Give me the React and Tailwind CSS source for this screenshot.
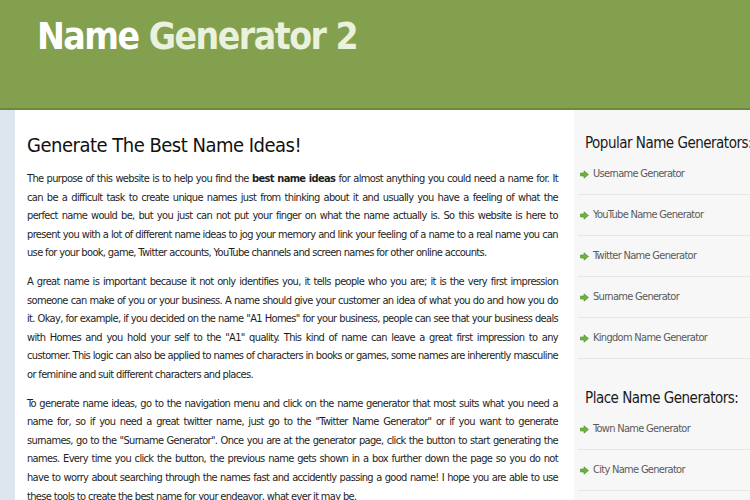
const popular = [
  'Username Generator',
  'YouTube Name Generator',
  'Twitter Name Generator',
  'Surname Generator',
  'Kingdom Name Generator',
];

const places = ['Town Name Generator', 'City Name Generator', 'Country Name Generator'];

const Arrow = () => (
  <svg width="9" height="9" viewBox="0 0 9 9" className="shrink-0">
    <path d="M0.5 3 H4 V0.8 L8.5 4.5 L4 8.2 V6 H0.5 Z" fill="#6fb33f" stroke="#4f8a2a" strokeWidth="0.6" />
  </svg>
);

const SideList = ({ items }) => (
  <ul className="flex flex-col">
    {items.map((name) => (
      <li
        key={name}
        className="h-[41px] flex items-center gap-[4px] pl-[2px] border-b border-[#e6e6e6] text-[11px] tracking-[-0.7px] text-[#5a5a5a]"
      >
        <Arrow />
        <span>{name}</span>
      </li>
    ))}
  </ul>
);

export default function App() {
  return (
    <div
      className="w-[750px] h-[500px] overflow-hidden bg-[#dde6ee]"
      style={{ fontFamily: '"DejaVu Sans Condensed", "Liberation Sans Narrow", sans-serif' }}
    >
      <header className="h-[110px] bg-[#83a04f] border-b-2 border-[#6b8a3d] pl-[37px] pt-[10px]">
        <h1 className="text-[37px] font-bold leading-[54px] tracking-[-1.5px]">
          <span className="text-white">Name </span>
          <span className="text-[#eaf1dc]">Generator 2</span>
        </h1>
      </header>
      <div className="flex pl-[15px]">
        <main className="w-[559px] shrink-0 bg-white pl-[12px] pr-[16px] pt-[20px] pb-10">
          <h2 className="text-[20px] leading-[30px] tracking-[-0.5px] text-[#111] mb-[10px]">
            Generate The Best Name Ideas!
          </h2>
          <div className="text-[11px] leading-[18.6px] tracking-[-0.65px] text-[#1e1e1e] text-justify flex flex-col gap-[10px]">
            <p>
              The purpose of this website is to help you find the <b>best name ideas</b> for almost anything you could need a name for. It can be a difficult task to create unique names just from thinking about it and usually you have a feeling of what the perfect name would be, but you just can not put your finger on what the name actually is. So this website is here to present you with a lot of different name ideas to jog your memory and link your feeling of a name to a real name you can use for your book, game, Twitter accounts, YouTube channels and screen names for other online accounts.
            </p>
            <p>
              A great name is important because it not only identifies you, it tells people who you are; it is the very first impression someone can make of you or your business. A name should give your customer an idea of what you do and how you do it. Okay, for example, if you decided on the name "A1 Homes" for your business, people can see that your business deals with Homes and you hold your self to the "A1" quality. This kind of name can leave a great first impression to any customer. This logic can also be applied to names of characters in books or games, some names are inherently masculine or feminine and suit different characters and places.
            </p>
            <p>
              To generate name ideas, go to the navigation menu and click on the name generator that most suits what you need a name for, so if you need a great twitter name, just go to the "Twitter Name Generator" or if you want to generate surnames, go to the "Surname Generator". Once you are at the generator page, click the button to start generating the names. Every time you click the button, the previous name gets shown in a box further down the page so you do not have to worry about searching through the names fast and accidently passing a good name! I hope you are able to use these tools to create the best name for your endeavor, what ever it may be.
            </p>
          </div>
        </main>
        <aside className="flex-1 bg-[#f7f7f7] pl-[4px] pt-[22px]">
          <h3 className="text-[15px] leading-[22px] tracking-[-0.5px] text-[#1a1a1a] pl-[7px] whitespace-nowrap">
            Popular Name Generators:
          </h3>
          <SideList items={popular} />
          <h3 className="text-[15px] leading-[22px] tracking-[-0.5px] text-[#1a1a1a] pl-[7px] pt-[28px] whitespace-nowrap">
            Place Name Generators:
          </h3>
          <SideList items={places} />
        </aside>
      </div>
    </div>
  );
}
